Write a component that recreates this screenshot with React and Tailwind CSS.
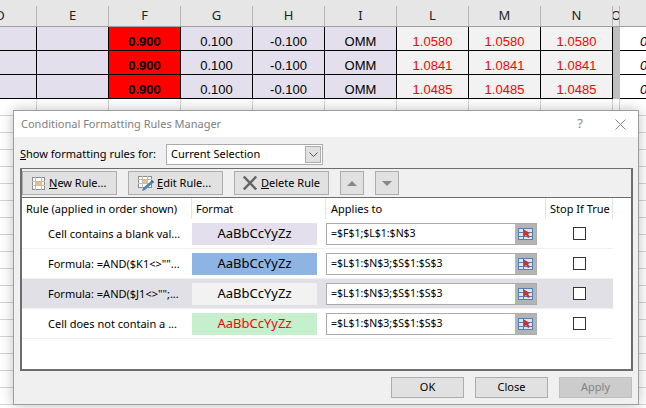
const ui = { fontFamily: '"Noto Sans", "Open Sans", sans-serif' };

const columns = ["w-[37px]", "w-[72px]", "w-[72px]", "w-[72px]", "w-[72px]", "w-[72px]", "w-[72px]", "w-[72px]", "w-[72px]", "w-[7px]"];
const gridRows = Array.from({ length: 18 }, (_, i) => i);
const rows = ["1.0580", "1.0841", "1.0485"];

function Cell({ w, className = "", children }) {
  return (
    <div className={`${w} h-6 shrink-0 flex items-end justify-center pb-[1px] leading-[15px] border-r border-b border-black text-[13px] ${className}`}>
      {children}
    </div>
  );
}

function DataRow({ val }) {
  return (
    <div className="flex">
      <Cell w="w-[37px]" className="bg-[#e4dfec]" />
      <Cell w="w-[72px]" className="bg-[#e4dfec]" />
      <Cell w="w-[72px]" className="bg-[#ff0000] font-bold">0.900</Cell>
      <Cell w="w-[72px]" className="bg-[#e4dfec]">0.100</Cell>
      <Cell w="w-[72px]" className="bg-[#e4dfec]">-0.100</Cell>
      <Cell w="w-[72px]" className="bg-[#e4dfec]">OMM</Cell>
      <Cell w="w-[72px]" className="bg-[#f2f2f2] text-[#ff0000]">{val}</Cell>
      <Cell w="w-[72px]" className="bg-[#f2f2f2] text-[#ff0000]">{val}</Cell>
      <Cell w="w-[72px]" className="bg-[#f2f2f2] text-[#ff0000]">{val}</Cell>
      <div className="w-[7px] h-6 shrink-0 bg-[#bfbfbf]" />
      <div className="flex-1 h-6 border-b border-black italic text-[13px] pl-[20px] flex items-end pb-[1px] leading-[15px] bg-white">0</div>
    </div>
  );
}

function Head({ w, children }) {
  return (
    <div className={`${w} h-[20px] shrink-0 overflow-hidden flex items-center justify-center border-r border-[#b5b5b5] text-[13px] text-[#222]`} style={ui}>
      {children}
    </div>
  );
}

function NewIcon() {
  return (
    <svg width="13" height="13" viewBox="0 0 13 13">
      <rect x="0.5" y="0.5" width="12" height="12" fill="#fff" stroke="#8c8c8c" />
      <path d="M0 4.5h13M0 8.5h13M3.5 0v13M9.5 0v13" stroke="#bdbdbd" />
      <rect x="4" y="5" width="5" height="3" fill="#f0c070" />
    </svg>
  );
}

function EditIcon() {
  return (
    <svg width="17" height="15" viewBox="0 0 17 15">
      <rect x="0.5" y="0.5" width="13" height="11" fill="#fff" stroke="#8c8c8c" />
      <path d="M0 3.5h14M0 7.5h14M4.5 0v12M9.5 0v12" stroke="#bdbdbd" />
      <rect x="5" y="4" width="5" height="3" fill="#f0c070" />
      <path d="M4 15l1-3 8-7 2 2-8 7z" fill="#4f81bd" />
      <path d="M13 5l1-1 2 2-1 1z" fill="#1f4e79" />
    </svg>
  );
}

function DeleteIcon() {
  return (
    <svg width="14" height="14" viewBox="0 0 14 14">
      <path d="M0.8 0.5L13.2 13.5M13.2 0.5L0.8 13.5" stroke="#666" strokeWidth="2.4" fill="none" />
    </svg>
  );
}

function CloseIcon() {
  return (
    <svg width="11" height="11" viewBox="0 0 11 11" className="mr-[12px]">
      <path d="M0.5 0.5l10 10M10.5 0.5l-10 10" stroke="#888" fill="none" />
    </svg>
  );
}

function RefIcon() {
  return (
    <svg width="15" height="12" viewBox="0 0 15 12">
      <rect width="15" height="12" fill="#dce6f1" />
      <path d="M0 0.5h15M0 4.5h15M0 8.5h15M0 11.5h15M0.5 0v12M5.5 0v12M14.5 0v12" stroke="#4f81bd" />
      <path d="M5 1l7 4-2 1 2 3-2 1-2-3-2 2z" fill="#c0392b" />
    </svg>
  );
}

const btn = "h-[24px] bg-[#e1e1e1] border border-[#adadad] flex items-center text-[11px] text-black whitespace-nowrap";

function Rule({ label, bg, color = "text-black", applies, selected }) {
  return (
    <div className={`flex h-[30px] shrink-0 items-center border-b border-[#f0f0f0] w-[591px] ${selected ? "bg-[#e0e0e6]" : "bg-white"}`}>
      <div className="w-[170px] shrink-0 pl-[26px] pt-[1px] text-[11px] whitespace-nowrap overflow-hidden">{label}</div>
      <div className={`w-[125px] h-[22px] shrink-0 flex items-center justify-center text-[13px] ${bg} ${color}`}>AaBbCcYyZz</div>
      <div className="ml-[9px] w-[211px] h-[22px] shrink-0 flex border border-[#ababab] bg-white">
        <div className="flex-1 pl-[4px] pt-[1px] text-[10.5px] flex items-center whitespace-nowrap">{applies}</div>
        <div className="w-[21px] bg-[#b4b4b4] flex items-center justify-center"><RefIcon /></div>
      </div>
      <div className="ml-[36px] w-[13px] h-[13px] shrink-0 border border-[#333] bg-white" />
    </div>
  );
}

export default function App() {
  return (
    <div className="relative w-[646px] h-[408px] overflow-hidden bg-white" style={{ fontFamily: '"Liberation Sans", Arial, sans-serif' }}>
      <div className="bg-[#e6e6e6] pt-[6px] h-[27px] flex border-b border-[#9f9f9f]">
        <Head w="w-[73px] -ml-[36px]">D</Head>
        <Head w="w-[72px]">E</Head>
        <Head w="w-[72px]">F</Head>
        <Head w="w-[72px]">G</Head>
        <Head w="w-[72px]">H</Head>
        <Head w="w-[72px]">I</Head>
        <Head w="w-[72px]">L</Head>
        <Head w="w-[72px]">M</Head>
        <Head w="w-[72px]">N</Head>
        <Head w="w-[7px]">O</Head>
      </div>
      {rows.map((r) => <DataRow key={r} val={r} />)}
      {gridRows.map((r) => (
        <div key={r} className="flex h-[17px] border-b border-[#d4d4d4]">
          {columns.map((w, i) => <div key={i} className={`${w} shrink-0 border-r border-[#d4d4d4]`} />)}
        </div>
      ))}

      <div className="absolute left-[13px] top-[110px] w-[626px] h-[295px] bg-[#f0f0f0] border border-[#9d9d9d] shadow-[0_0_12px_rgba(0,0,0,0.25)] flex flex-col text-black" style={ui}>
        <div className="h-[26px] shrink-0 bg-white flex items-center pl-[7px] text-[11px] text-[#808080]">
          Conditional Formatting Rules Manager
          <span className="ml-auto mr-[32px] text-[13px] text-[#888]">?</span>
          <CloseIcon />
        </div>
        <div className="flex items-center h-[31px] shrink-0 pl-[6px] pt-[3px]">
          <span className="text-[11px] w-[146px] whitespace-nowrap"><u>S</u>how formatting rules for:</span>
          <div className="w-[157px] h-[21px] bg-white border border-[#ababab] flex items-center pl-[4px] text-[11px]">
            Current Selection
            <div className="ml-auto mr-[1px] w-[16px] h-[17px] bg-[#e1e1e1] border border-[#adadad] flex items-center justify-center">
              <svg width="9" height="5" viewBox="0 0 9 5"><path d="M0.5 0.5l4 4 4-4" stroke="#555" fill="none" /></svg>
            </div>
          </div>
        </div>
        <div className="ml-[6px] w-[613px] h-[203px] shrink-0 border-2 border-t border-[#6d6d6d] bg-white flex flex-col">
          <div className="flex h-[29px] shrink-0 pt-[2px] bg-[#f0f0f0] border-b border-[#6d6d6d]">
            <button className={`${btn} w-[95px] gap-[4px] pl-[9px]`}><NewIcon /><span><u>N</u>ew Rule...</span></button>
            <button className={`${btn} w-[95px] gap-[2px] pl-[9px] ml-[11px]`}><EditIcon /><span><u>E</u>dit Rule...</span></button>
            <button className={`${btn} w-[95px] gap-[4px] pl-[8px] ml-[11px]`}><DeleteIcon /><span><u>D</u>elete Rule</span></button>
            <button className={`${btn} w-[24px] justify-center ml-[11px]`}><span className="w-0 h-0 border-x-[5px] border-x-transparent border-b-[5px] border-b-[#888]" /></button>
            <button className={`${btn} w-[24px] justify-center ml-[11px]`}><span className="w-0 h-0 border-x-[5px] border-x-transparent border-t-[5px] border-t-[#888]" /></button>
          </div>
          <div className="flex h-[21px] shrink-0 items-center text-[11px] whitespace-nowrap">
            <div className="w-[170px] pl-[4px] pt-[1px] h-full flex items-center border-r border-[#e5e5e5]">Rule (applied in order shown)</div>
            <div className="w-[134px] pl-[4px] pt-[1px] h-full flex items-center border-r border-[#e5e5e5]">Format</div>
            <div className="w-[220px] pl-[5px] pt-[1px] h-full flex items-center border-r border-[#e5e5e5]">Applies to</div>
            <div className="w-[67px] pl-[4px] pt-[1px] h-full flex items-center border-r border-[#e5e5e5]">Stop If True</div>
          </div>
          <Rule label="Cell contains a blank val..." bg="bg-[#e4dfec]" applies="=$F$1;$L$1:$N$3" />
          <Rule label='Formula: =AND($K1<>""...' bg="bg-[#8db4e2]" applies="=$L$1:$N$3;$S$1:$S$3" />
          <Rule label='Formula: =AND($J1<>"";...' bg="bg-[#f2f2f2]" applies="=$L$1:$N$3;$S$1:$S$3" selected />
          <Rule label="Cell does not contain a ..." bg="bg-[#c6efce]" color="text-[#ff0000]" applies="=$L$1:$N$3;$S$1:$S$3" />
        </div>
        <div className="flex justify-end gap-[11px] pr-[6px] pt-[6px]">
          <button className={`${btn} !h-[21px] w-[73px] justify-center`}>OK</button>
          <button className={`${btn} !h-[21px] w-[73px] justify-center`}>Close</button>
          <button className={`${btn} !h-[21px] w-[73px] justify-center !bg-[#cccccc] !border-[#bfbfbf] !text-[#838383]`}>Apply</button>
        </div>
      </div>
    </div>
  );
}
